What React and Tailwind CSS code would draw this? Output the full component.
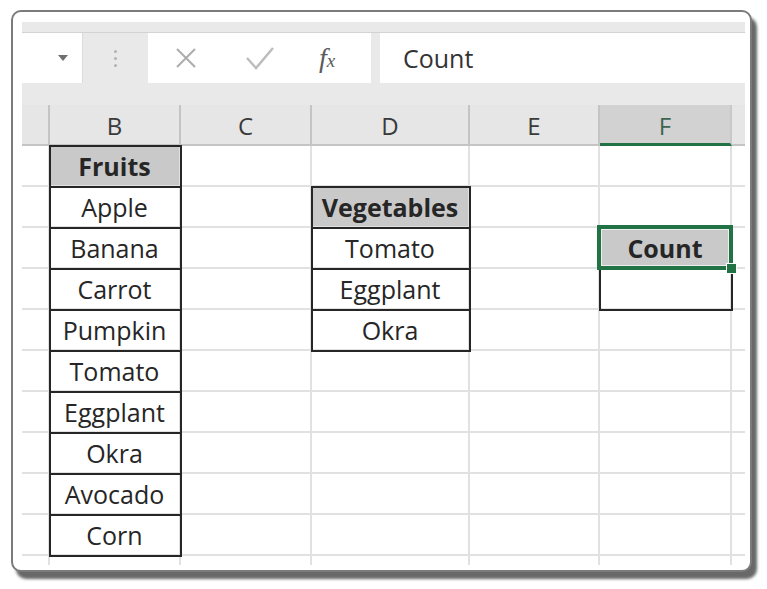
import React from 'react';

const cols = ['', 'B', 'C', 'D', 'E', 'F', ''];

// each row: [B, D, F] contents, h = header style
const rows = [
  { b: 'Fruits', bh: true },
  { b: 'Apple', d: 'Vegetables', dh: true },
  { b: 'Banana', d: 'Tomato', f: 'Count', fh: true, sel: true },
  { b: 'Carrot', d: 'Eggplant', f: '', fBox: true },
  { b: 'Pumpkin', d: 'Okra' },
  { b: 'Tomato' },
  { b: 'Eggplant' },
  { b: 'Okra' },
  { b: 'Avocado' },
  { b: 'Corn' },
];

function Cell({ text, head, boxed, selected, last }) {
  return (
    <div
      className={
        'relative flex h-[41px] items-center justify-center pt-[3px] text-[25px] text-[#262626] ' +
        (last ? 'border-b-2 border-[#e1e1e1] ' : 'border-b-2 border-r-2 border-[#e1e1e1] ') +
        (head ? 'bg-[#c9c9c9] font-bold ' : '') +
        (boxed && !selected ? 'z-10 outline-2 outline-[#262626] -outline-offset-1 ' : '') +
        (selected ? 'z-20 ' : '')
      }
    >
      {text}
      {selected && (
        <>
          <div className="absolute -inset-[3px] border-4 border-[#217346]">
            <div className="h-full w-full border border-[#eeeeee]" />
          </div>
          <div className="absolute -bottom-[7px] -right-[7px] h-[11px] w-[11px] border border-white bg-[#217346]" />
        </>
      )}
    </div>
  );
}

function GridRow({ row }) {
  return (
    <>
      <Cell />
      <Cell text={row.b} head={row.bh} boxed />
      <Cell />
      <Cell text={row.d} head={row.dh} boxed={row.d !== undefined} />
      <Cell />
      <Cell text={row.f} head={row.fh} boxed={row.f !== undefined} selected={row.sel} />
      <Cell last />
    </>
  );
}

export default function App() {
  return (
    <div className="min-h-screen bg-white pl-[11px] pt-[10px] font-['Open_Sans',sans-serif]">
      <div className="h-[562px] w-[741px] overflow-hidden rounded-[10px] border-2 border-[#7b7b7b] bg-white pl-[9px] pr-[5px] pt-[10px] shadow-[5px_7px_3px_#686868]">
        {/* formula bar */}
        <div className="bg-[#e9e9e9]">
          <div className="h-[11px] border-b border-[#d3d3d3]" />
          <div className="flex h-[50px]">
            <div className="relative flex w-[61px] items-center justify-end border-r border-[#dcdcdc] bg-white pr-[14px]">
              <svg width="10" height="6" viewBox="0 0 10 6">
                <path d="M0 0h10L5 6z" fill="#6f6f6f" />
              </svg>
            </div>
            <div className="flex w-[65px] flex-col items-center justify-center gap-[4px] pr-[1px]">
              <span className="h-[3px] w-[3px] rounded-full bg-[#b3b3b3]" />
              <span className="h-[3px] w-[3px] rounded-full bg-[#b3b3b3]" />
              <span className="h-[3px] w-[3px] rounded-full bg-[#b3b3b3]" />
            </div>
            <div className="flex w-[223px] items-center bg-white">
              <svg className="ml-[26px]" width="24" height="20" viewBox="0 0 24 20">
                <path d="M3 1l18 18M21 1L3 19" stroke="#adadad" strokeWidth="2" fill="none" />
              </svg>
              <svg className="ml-[47px]" width="30" height="24" viewBox="0 0 30 24">
                <path d="M2 12l9 10L28 2" stroke="#bdbdbd" strokeWidth="2.5" fill="none" />
              </svg>
              <span className="ml-[44px] font-['Liberation_Serif',serif] text-[28px] italic leading-none text-[#5a5a5a]">
                f<span className="text-[19px]">x</span>
              </span>
            </div>
            <div className="ml-[9px] flex flex-1 items-center bg-white pl-[23px] pt-[2px] text-[25px] text-[#333]">
              Count
            </div>
          </div>
          <div className="h-[22px]" />
        </div>

        {/* sheet grid */}
        <div className="grid grid-cols-[28px_131px_131px_158px_130px_132px_13px]">
          {cols.map((c, i) => (
            <div
              key={i}
              className={
                'flex h-[41px] items-center justify-center pt-[3px] text-[24px] ' +
                (c === 'F'
                  ? 'border-b-[3px] border-r-2 border-b-[#217346] border-r-[#c8c8c8] bg-[#d2d2d2] text-[#3d6650] '
                  : 'border-b-2 border-[#c4c4c4] bg-[#e6e6e6] text-[#3a3a3a] ') +
                (i < 6 && c !== 'F' ? 'border-r-2 ' : '')
              }
            >
              {c}
            </div>
          ))}
          {rows.map((r, i) => (
            <GridRow key={i} row={r} />
          ))}
          {cols.map((c, i) => (
            <div key={'e' + i} className={'h-[9px] ' + (i < 6 ? 'border-r-2 border-[#e1e1e1]' : '')} />
          ))}
        </div>
      </div>
    </div>
  );
}
